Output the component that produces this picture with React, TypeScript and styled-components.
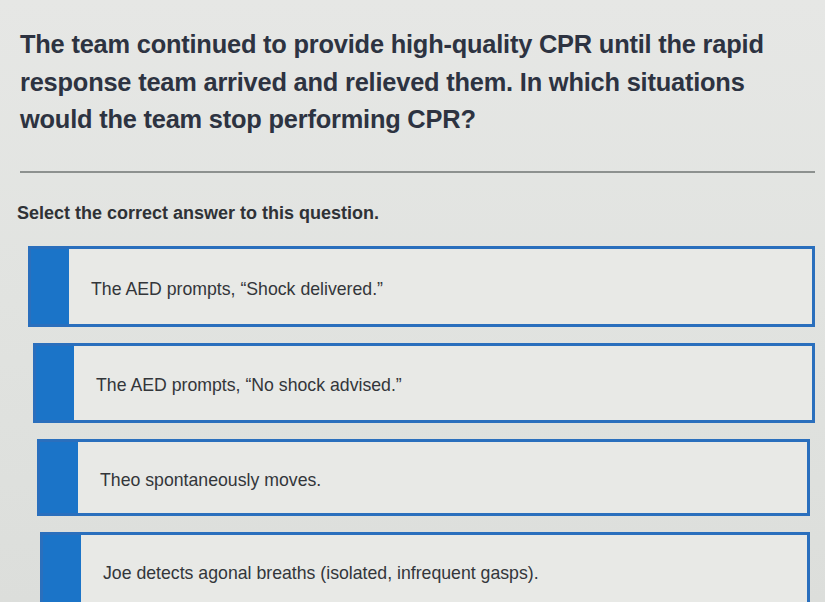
import styled, { createGlobalStyle } from 'styled-components';

const GlobalStyle = createGlobalStyle`
  html, body {
    margin: 0;
    padding: 0;
    background: #dfe1de;
  }
`;

const Page = styled.div`
  width: 825px;
  height: 602px;
  overflow: hidden;
  box-sizing: border-box;
  padding: 26px 10px 0 20px;
  font-family: "Liberation Sans", Arial, sans-serif;
  background: linear-gradient(180deg, #e6e7e5 0%, #e1e3e0 50%, #dcdedb 100%);
`;

const Question = styled.h1`
  margin: 0;
  font-size: 25.4px;
  line-height: 37.5px;
  font-weight: 700;
  color: #2d3341;
  letter-spacing: -0.2px;
  white-space: nowrap;
`;

const Rule = styled.hr`
  margin: 32px 0 0 0;
  border: none;
  border-top: 2px solid #8d918f;
`;

const Prompt = styled.p`
  margin: 30px 0 0 -3px;
  font-size: 18px;
  font-weight: 700;
  color: #2f3236;
`;

const Options = styled.div`
  display: flex;
  flex-direction: column;
  gap: 16px;
  margin-top: 22px;
`;

const Card = styled.div<{ $indent: number; $right: number; $height: number }>`
  display: flex;
  box-sizing: border-box;
  height: ${p => p.$height}px;
  flex-shrink: 0;
  margin-left: ${p => p.$indent}px;
  margin-right: ${p => p.$right}px;
  border: 3px solid #2a6fbd;
  background: #e8e9e6;
`;

const Bar = styled.div`
  width: 38px;
  flex-shrink: 0;
  background: #1b74c8;
`;

const Label = styled.div`
  display: flex;
  align-items: center;
  padding: 6px 0 0 22px;
  font-size: 17.7px;
  color: #33363a;
`;

const options = [
  { text: 'The AED prompts, “Shock delivered.”', indent: 8, right: 0, height: 81 },
  { text: 'The AED prompts, “No shock advised.”', indent: 13, right: 0, height: 80 },
  { text: 'Theo spontaneously moves.', indent: 17, right: 5, height: 77 },
  { text: 'Joe detects agonal breaths (isolated, infrequent gasps).', indent: 20, right: 5, height: 77 },
];

export default function App() {
  return (
    <>
      <GlobalStyle />
      <Page>
        <Question>
          The team continued to provide high-quality CPR until the rapid
          <br />
          response team arrived and relieved them. In which situations
          <br />
          would the team stop performing CPR?
        </Question>
        <Rule />
        <Prompt>Select the correct answer to this question.</Prompt>
        <Options>
          {options.map(o => (
            <Card key={o.text} $indent={o.indent} $right={o.right} $height={o.height}>
              <Bar />
              <Label>{o.text}</Label>
            </Card>
          ))}
        </Options>
      </Page>
    </>
  );
}
